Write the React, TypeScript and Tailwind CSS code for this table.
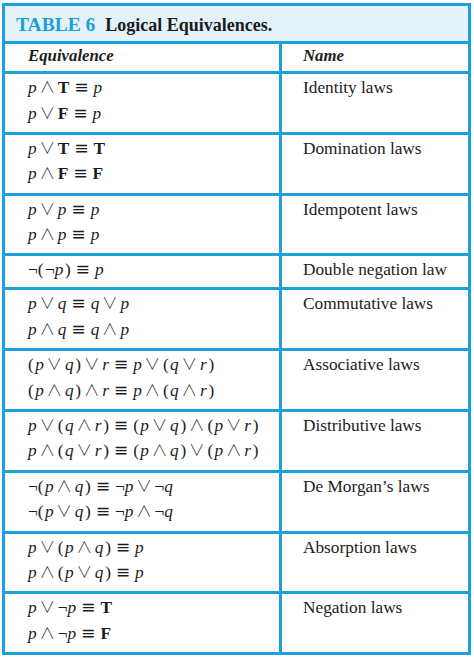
import { Fragment } from "react";

const serif = "font-['Liberation_Serif','DejaVu_Serif',serif]";

const rows: { eq: string[]; name: string; single?: boolean }[] = [
  { eq: ["p&T=p", "p|F=p"], name: "Identity laws" },
  { eq: ["p|T=T", "p&F=F"], name: "Domination laws" },
  { eq: ["p|p=p", "p&p=p"], name: "Idempotent laws" },
  { eq: ["~(~p)=p"], name: "Double negation law", single: true },
  { eq: ["p|q=q|p", "p&q=q&p"], name: "Commutative laws" },
  { eq: ["(p|q)|r=p|(q|r)", "(p&q)&r=p&(q&r)"], name: "Associative laws" },
  { eq: ["p|(q&r)=(p|q)&(p|r)", "p&(q|r)=(p&q)|(p&r)"], name: "Distributive laws" },
  { eq: ["~(p&q)=~p|~q", "~(p|q)=~p&~q"], name: "De Morgan’s laws" },
  { eq: ["p|(p&q)=p", "p&(p|q)=p"], name: "Absorption laws" },
  { eq: ["p|~p=T", "p&~p=F"], name: "Negation laws" },
];

// thin wedge glyphs, like the book's math font
const op = "mx-[0.18em] text-[0.9em] leading-none font-['Noto_Sans_CJK_JP','DejaVu_Serif',serif] font-light";

// p&T=p  ->  p ∧ T ≡ p
function Formula({ src }: { src: string }) {
  return (
    <span className="block h-[25.5px] whitespace-nowrap">
      {src.split("").map((c, i) => {
        if (c === "p" || c === "q" || c === "r")
          return (
            <i key={i} className="italic">
              {c}
            </i>
          );
        if (c === "T" || c === "F")
          return (
            <b key={i} className="font-bold">
              {c}
            </b>
          );
        if (c === "&")
          return (
            <span key={i} className={op}>
              ∧
            </span>
          );
        if (c === "|")
          return (
            <span key={i} className={op}>
              ∨
            </span>
          );
        if (c === "=")
          return (
            <span key={i} className="mx-[0.28em] font-['DejaVu_Serif',serif]">
              ≡
            </span>
          );
        if (c === "~") return <span key={i}>¬</span>;
        if (c === "(") return <span key={i} className="mr-[0.08em]">(</span>;
        if (c === ")") return <span key={i} className="ml-[0.1em]">)</span>;
        return <Fragment key={i}>{c}</Fragment>;
      })}
    </span>
  );
}

export default function App() {
  return (
    <div className={`min-h-screen bg-white pt-[3px] pl-[2px] text-[#1c1c1c] ${serif}`}>
      <div className="w-[469px] border-[3px] border-[#1da1dc]">
        <div className="flex h-[38px] items-baseline gap-[10px] border-b-[3px] border-[#1da1dc] bg-[#e4f2fa] pl-[11px] pt-[1px] leading-[35px]">
          <span className="text-[19.5px] font-bold text-[#1d9fdb]">TABLE 6</span>
          <span className="text-[18px] font-bold">Logical Equivalences.</span>
        </div>

        <div className="grid grid-cols-[277px_1fr]">
          <div className="h-[30px] border-r-[3px] border-b-[3px] border-[#1da1dc] pl-[23px] text-[16.8px] leading-[23px] font-bold italic">
            Equivalence
          </div>
          <div className="h-[30px] border-b-[3px] border-[#1da1dc] pl-[21px] text-[16.8px] leading-[23px] font-bold italic">
            Name
          </div>

          {rows.map((row, i) => {
            const last = i === rows.length - 1;
            const h = row.single ? "h-[34px]" : last ? "h-[57.8px]" : "h-[60.8px]";
            const b = last ? "" : "border-b-[3px]";
            return (
              <Fragment key={row.name}>
                <div
                  className={`${h} ${b} flex flex-col border-r-[3px] border-[#1da1dc] pl-[23px] pt-[1px] text-[17.3px] leading-[25.5px]`}
                >
                  {row.eq.map((e) => (
                    <Formula key={e} src={e} />
                  ))}
                </div>
                <div className={`${h} ${b} border-[#1da1dc] pl-[21px] pt-[1px] text-[17.3px] leading-[25.5px]`}>
                  {row.name}
                </div>
              </Fragment>
            );
          })}
        </div>
      </div>
    </div>
  );
}
